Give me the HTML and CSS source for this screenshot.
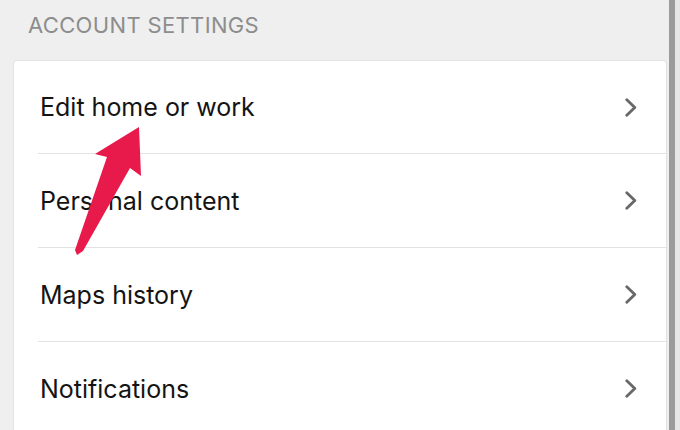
FILE: index.html
```html
<!DOCTYPE html>
<html>
<head>
<meta charset="utf-8">
<link rel="stylesheet" href="styles.css">
</head>
<body>
<div class="page">
  <div class="main">
    <div class="section-title">ACCOUNT SETTINGS</div>
    <div class="card">
      <div class="row first"><span class="label">Edit home or work</span><svg class="chev" viewBox="0 0 12 19"><path d="M1.8 1.8 L9.8 9.5 L1.8 17.2" /></svg></div>
      <div class="row"><span class="label">Personal content</span><svg class="chev" viewBox="0 0 12 19"><path d="M1.8 1.8 L9.8 9.5 L1.8 17.2" /></svg></div>
      <div class="row"><span class="label">Maps history</span><svg class="chev" viewBox="0 0 12 19"><path d="M1.8 1.8 L9.8 9.5 L1.8 17.2" /></svg></div>
      <div class="row last"><span class="label">Notifications</span><svg class="chev" viewBox="0 0 12 19"><path d="M1.8 1.8 L9.8 9.5 L1.8 17.2" /></svg></div>
    </div>
  </div>
  <div class="scrollbar"></div>
  <div class="track"></div>
  <svg class="arrow" viewBox="0 0 680 430" width="680" height="430">
    <polygon points="139,127 141,176 130,168 83,251 77,255 75,250 107,157 95,154" />
  </svg>
</div>
</body>
</html>
```

FILE: styles.css
```css
html, body {
  margin: 0;
  padding: 0;
  background: #efefef;
  overflow: hidden;
}
.page {
  position: relative;
  display: flex;
  width: 680px;
  height: 430px;
  font-family: Inter, "Open Sans", "Liberation Sans", sans-serif;
}
.main {
  width: 669px;
  height: 430px;
  overflow: hidden;
}
.section-title {
  height: 60px;
  box-sizing: border-box;
  padding: 12px 0 0 28px;
  font-size: 22px;
  letter-spacing: 0.35px;
  color: #8d8d8d;
  line-height: 26px;
}
.card {
  margin-left: 13px;
  width: 654px;
  box-sizing: border-box;
  background: #ffffff;
  border: 1px solid #e3e3e3;
  border-bottom: none;
  border-radius: 4px 4px 0 0;
  height: 400px;
}
.row {
  display: flex;
  align-items: center;
  justify-content: space-between;
  height: 93px;
  margin-left: 24px;
  padding: 0 29px 0 2px;
  border-bottom: 1px solid #e2e2e2;
}
.row.first {
  height: 92px;
}
.row.last {
  border-bottom: none;
}
.label {
  font-size: 25px;
  color: #141414;
  letter-spacing: 0;
}
.chev {
  width: 12px;
  height: 19px;
  fill: none;
  stroke: #686868;
  stroke-width: 2.8;
  stroke-linecap: round;
  stroke-linejoin: round;
}
.scrollbar {
  width: 6px;
  height: 430px;
  background: #9b9b9b;
}
.track {
  width: 5px;
  height: 430px;
  background: #e6e6e6;
}
.arrow {
  position: absolute;
  left: 0;
  top: 0;
  pointer-events: none;
}
.arrow polygon {
  fill: #e8194b;
}
```
